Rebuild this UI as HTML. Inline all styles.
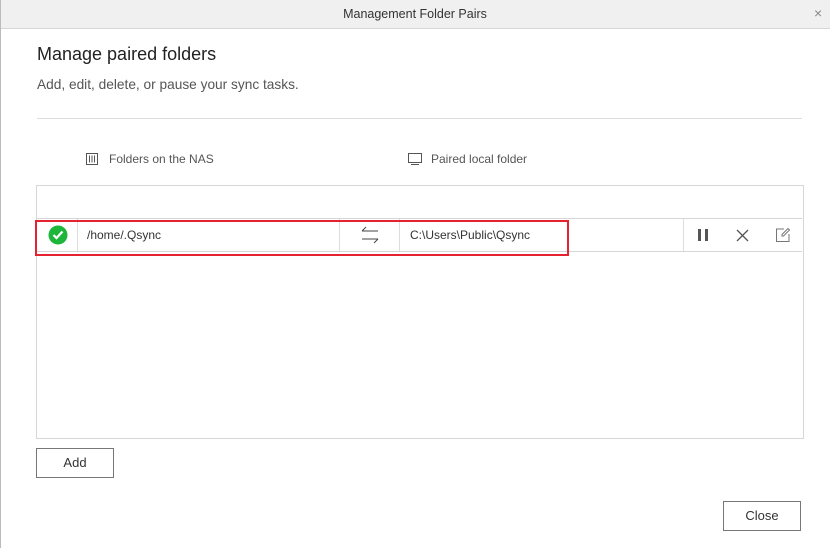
<!DOCTYPE html>
<html><head><style>
body{margin:0;width:830px;height:548px;background:#fff;font-family:"Liberation Sans",sans-serif;position:relative;overflow:hidden;color:#333}
.a{position:absolute}
</style></head><body>
<div class="a" style="left:0;top:0;width:830px;height:28px;background:#f0f0f0;border-bottom:1px solid #d6d6d6"></div>
<div class="a" style="left:0;top:0;width:1px;height:548px;background:#bbb"></div>
<div class="a" style="left:0;top:7px;width:830px;text-align:center;font-size:12.5px;color:#333">Management Folder Pairs</div>
<div class="a" style="left:814px;top:5px;font-size:14px;color:#888">×</div>
<div class="a" style="left:37px;top:44px;font-size:18px;color:#222">Manage paired folders</div>
<div class="a" style="left:37px;top:77px;font-size:13.7px;color:#555">Add, edit, delete, or pause your sync tasks.</div>
<div class="a" style="left:37px;top:118px;width:765px;height:1px;background:#ddd"></div>
<svg class="a" style="left:86px;top:153px" width="12" height="12"><rect x="0.5" y="0.5" width="11" height="11" fill="none" stroke="#555"/><path d="M3.5 2.5v7M6 2.5v7M8.5 2.5v7" stroke="#555"/></svg>
<div class="a" style="left:109px;top:152px;font-size:12px;color:#555">Folders on the NAS</div>
<svg class="a" style="left:408px;top:153px" width="14" height="12"><rect x="0.5" y="0.5" width="13" height="9" fill="none" stroke="#555"/><path d="M3 11.5h8" stroke="#555"/></svg>
<div class="a" style="left:431px;top:152px;font-size:12px;color:#555">Paired local folder</div>
<div class="a" style="left:36px;top:185px;width:766px;height:252px;border:1px solid #d6d6d6"></div>
<div class="a" style="left:37px;top:218px;width:765px;height:1px;background:#d6d6d6"></div>
<div class="a" style="left:37px;top:251px;width:765px;height:1px;background:#d6d6d6"></div>
<div class="a" style="left:77px;top:219px;width:1px;height:32px;background:#ddd"></div>
<div class="a" style="left:339px;top:219px;width:1px;height:32px;background:#ddd"></div>
<div class="a" style="left:399px;top:219px;width:1px;height:32px;background:#ddd"></div>
<div class="a" style="left:683px;top:219px;width:1px;height:32px;background:#ddd"></div>
<svg class="a" style="left:48px;top:225px" width="20" height="20"><circle cx="10" cy="10" r="9.5" fill="#1db53a"/><path d="M5.5 10l3 3 6-6.5" stroke="#fff" stroke-width="2.2" fill="none"/></svg>
<div class="a" style="left:87px;top:228px;font-size:12px;color:#333">/home/.Qsync</div>
<svg class="a" style="left:360px;top:226px" width="20" height="18"><path d="M2 5h16M2 5l4-4M18 13H2M18 13l-4 4" stroke="#444" fill="none"/></svg>
<div class="a" style="left:410px;top:228px;font-size:12px;color:#333">C:\Users\Public\Qsync</div>
<div class="a" style="left:35px;top:220px;width:530px;height:32px;border:2px solid #e52330"></div>
<div class="a" style="left:698px;top:229px;width:3px;height:12px;background:#555"></div>
<div class="a" style="left:705px;top:229px;width:3px;height:12px;background:#555"></div>
<svg class="a" style="left:736px;top:229px" width="13" height="13"><path d="M1 1l11 11M12 1L1 12" stroke="#555" stroke-width="1.3"/></svg>
<svg class="a" style="left:775px;top:227px" width="16" height="16"><path d="M9 2H1.5v12.5H14V7" stroke="#777" fill="none"/><path d="M13 1.5l1.5 1.5-6 6H7V7.5z" stroke="#777" fill="none"/></svg>
<div class="a" style="left:36px;top:448px;width:76px;height:28px;border:1px solid #777;text-align:center;line-height:28px;font-size:13px;color:#333">Add</div>
<div class="a" style="left:723px;top:501px;width:76px;height:28px;border:1px solid #777;text-align:center;line-height:28px;font-size:13px;color:#333">Close</div>
</body></html>
